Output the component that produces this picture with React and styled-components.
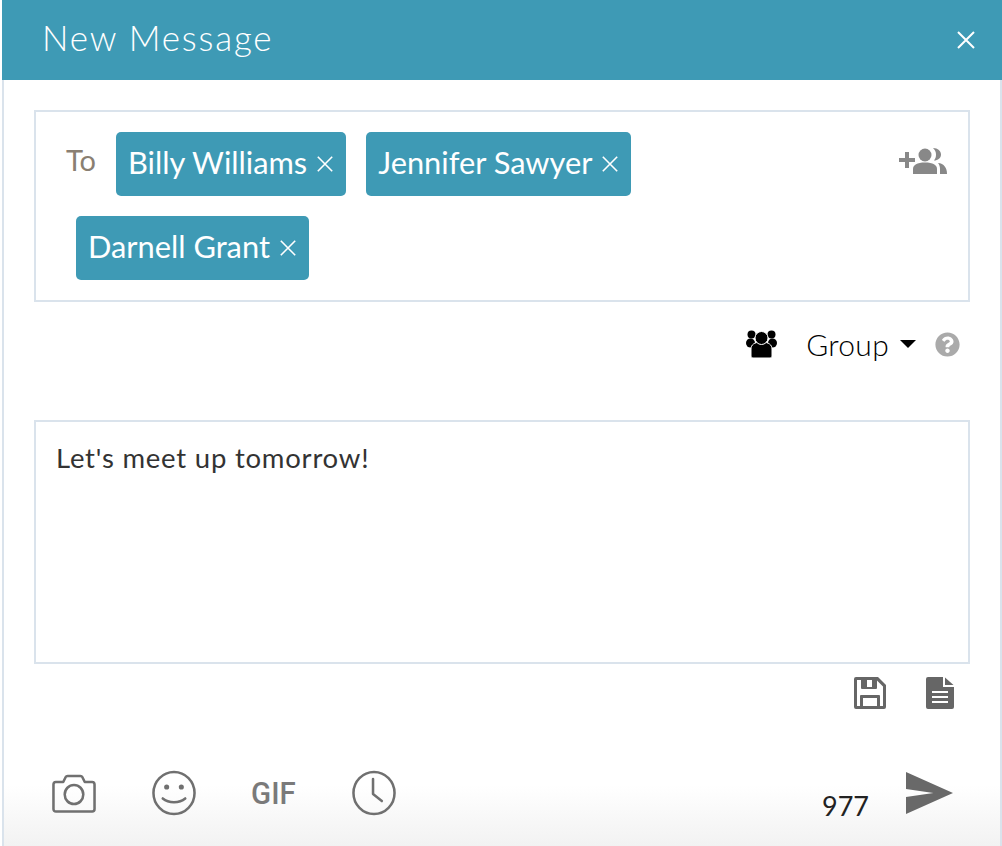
import React from 'react';
import styled, { createGlobalStyle } from 'styled-components';
import { FaQuestionCircle } from 'react-icons/fa';

const GlobalStyle = createGlobalStyle`
    html, body {
        margin: 0;
        padding: 0;
        background: #fff;
    }
    body {
        font-family: "Lato", "Open Sans", sans-serif;
        overflow: hidden;
    }
`

const Panel = styled.div`
    box-sizing: border-box;
    width: 1002px;
    height: 846px;
    padding-left: 2px;
    display: flex;
    flex-direction: column;
`

const Header = styled.header`
    box-sizing: border-box;
    height: 80px;
    flex: none;
    background: #3e9ab5;
    color: #fff;
    display: flex;
    align-items: center;
    justify-content: space-between;
    padding: 0 26px 0 40px;
`

const Title = styled.h1`
    margin: 0 0 6px;
    font-size: 35px;
    font-weight: 300;
    letter-spacing: 1.8px;
`

const Body = styled.main`
    box-sizing: border-box;
    flex: 1;
    display: flex;
    flex-direction: column;
    padding: 30px 30px 0 30px;
    border-left: 2px solid #dae3ec;
    border-right: 2px solid #dae3ec;
    background: linear-gradient(#fff 0, #fff 705px, #f2f2f2 766px);
`

const ToBox = styled.section`
    box-sizing: border-box;
    height: 192px;
    border: 2px solid #dae3ec;
    padding: 20px 21px 0 40px;
    display: flex;
    justify-content: space-between;
    align-items: flex-start;
`

const Chips = styled.div`
    display: flex;
    flex-wrap: wrap;
    gap: 20px;
    width: 600px;
`

const ToLabel = styled.span`
    margin-left: -10px;
    width: 30px;
    height: 56px;
    font-size: 29px;
    line-height: 56px;
    font-weight: 400;
    color: #8a7f72;
`

const Chip = styled.span`
    box-sizing: border-box;
    height: 64px;
    padding: 0 12px 0 12px;
    background: #3e9ab5;
    color: #fff;
    border-radius: 5px;
    display: inline-flex;
    align-items: center;
    gap: 9px;
    font-size: 30.8px;
    font-weight: 400;
`

const ChipName = styled.span`
    margin-top: -3px;
`

const AddGroup = styled.svg`
    width: 48px;
    height: 26px;
    flex: none;
    margin-top: 16px;
    fill: #888;
`

const GroupRow = styled.div`
    height: 84px;
    flex: none;
    display: flex;
    align-items: center;
    justify-content: flex-end;
    padding: 0 10px 0 0;
    margin-bottom: 34px;
`

const GroupIcon = styled.svg`
    width: 31px;
    height: 28px;
    margin-right: 29px;
    fill: #000;
    stroke: #fff;
    stroke-width: 1;
`

const GroupLabel = styled.span`
    font-size: 30px;
    font-weight: 300;
    letter-spacing: 0.3px;
    color: #000;
    margin-right: 11px;
`

const Caret = styled.span`
    width: 0;
    height: 0;
    border-left: 8px solid transparent;
    border-right: 8px solid transparent;
    border-top: 8px solid #000;
    margin-right: 19px;
`

const HelpIcon = styled(FaQuestionCircle)`
    font-size: 25px;
    color: #aaa;
`

const MessageBox = styled.div`
    box-sizing: border-box;
    height: 244px;
    flex: none;
    border: 2px solid #dae3ec;
    padding: 19px 20px;
    font-size: 27.5px;
    font-weight: 400;
    letter-spacing: 0.78px;
    color: #333;
`

const DraftRow = styled.div`
    display: flex;
    justify-content: flex-end;
    align-items: center;
    gap: 40px;
    height: 32px;
    margin-top: 13px;
    padding-right: 16px;
`

const Toolbar = styled.footer`
    display: flex;
    align-items: center;
    justify-content: space-between;
    margin-top: 61px;
    height: 46px;
    padding: 0 17px 0 18px;
`

const ToolGroup = styled.div`
    display: flex;
    align-items: center;
    gap: 56px;
`

const Icon = styled.svg`
    width: 44px;
    height: 46px;
    fill: none;
    stroke: #707070;
    stroke-width: 2.6;
    stroke-linecap: round;
    stroke-linejoin: round;
    display: block;
`

const Gif = styled.span`
    display: block;
    width: 44px;
    text-align: center;
    font-family: "Roboto", sans-serif;
    font-size: 31px;
    font-weight: 500;
    color: #7a7a7a;
    transform: translateX(-2px) scaleX(0.95);
`

const SendGroup = styled.div`
    display: flex;
    align-items: center;
    gap: 37px;
`

const Count = styled.span`
    font-size: 27px;
    font-weight: 400;
    color: #222;
    margin-top: 24px;
`

const SendIcon = styled.svg`
    width: 47px;
    height: 42px;
    fill: #696969;
`

function Close({ size, width }) {
    return (
        <svg width={size} height={size} viewBox="0 0 20 20" fill="none" stroke="#fff" strokeWidth={width}>
            <path d="M2 2 L18 18 M18 2 L2 18" />
        </svg>
    )
}

function App() {
    const chips = ['Billy Williams', 'Jennifer Sawyer', 'Darnell Grant'];
    return (
        <Panel>
            <GlobalStyle />
            <Header>
                <Title>New Message</Title>
                <Close size={20} width={2} />
            </Header>
            <Body>
                <ToBox>
                    <Chips>
                        <ToLabel>To</ToLabel>
                        {chips.map(name => (
                            <Chip key={name}><ChipName>{name}</ChipName><Close size={18} width={1.8} /></Chip>
                        ))}
                    </Chips>
                    <AddGroup viewBox="0 0 48 26">
                        <path d="M0 10h6V4h4v6h6v4h-6v6H6v-6H0z" />
                        <circle cx="26" cy="7" r="6.500" />
                        <path d="M14 26v-5c0-4 4-6.500 12-6.500s12 2.500 12 6.500v5z" />
                        <path d="M34 0c5 0 8 3 8 6.500s-3 6-7 6c1.500-2 2-3.500 2-6s-1-4.500-3-6.500z" />
                        <path d="M39 15c6 .5 9 5 9 11h-7v-5c0-2.500-.6-4.500-2-6z" />
                    </AddGroup>
                </ToBox>
                <GroupRow>
                    <GroupIcon viewBox="0 0 31 28">
                        <circle cx="5.500" cy="4.500" r="4" stroke="none" />
                        <circle cx="25.500" cy="4.500" r="4" stroke="none" />
                        <ellipse cx="4.500" cy="13" rx="4.500" ry="4.500" stroke="none" />
                        <ellipse cx="26.500" cy="13" rx="4.500" ry="4.500" stroke="none" />
                        <path d="M5 26V19c0-4 3-7 10.500-7s10.500 3 10.500 7v7c0 1-1 2-2 2H7c-1 0-2-1-2-2z" />
                        <circle cx="15.500" cy="8" r="6.500" />
                    </GroupIcon>
                    <GroupLabel>Group</GroupLabel>
                    <Caret />
                    <HelpIcon />
                </GroupRow>
                <MessageBox>Let's meet up tomorrow!</MessageBox>
                <DraftRow>
                    <svg width="32" height="32" viewBox="0 0 32 32">
                        <path fill="#666" fillRule="evenodd" d="M2 0H24L32 8V30a2 2 0 0 1-2 2H2a2 2 0 0 1-2-2V2a2 2 0 0 1 2-2zM3 3V29H6V19a1 1 0 0 1 1-1H25a1 1 0 0 1 1 1V29H29V9.500L23 3.500V11a1 1 0 0 1-1 1H8a1 1 0 0 1-1-1V3z" />
                        <path fill="#fff" d="M13 3h5v7h-5z" />
                        <path fill="#fff" d="M9 21h14v8H9z" />
                    </svg>
                    <svg width="28" height="32" viewBox="0 0 28 32">
                        <path fill="#666" d="M2 0H17V10H28V30a2 2 0 0 1-2 2H2a2 2 0 0 1-2-2V2a2 2 0 0 1 2-2z" />
                        <path fill="#666" d="M19 0.500L27.500 8H19z" />
                        <path fill="#fff" d="M6 14h16v2H6zM6 19h16v2H6zM6 24h16v2H6z" />
                    </svg>
                </DraftRow>
                <Toolbar>
                    <ToolGroup>
                        <Icon viewBox="0 0 45 46" preserveAspectRatio="none">
                            <path d="M1.500 14.500c0-1.500 1-2.500 2.500-2.500H11.500l2.500-5c.4-.8 1-1 2-1h13c1 0 1.600.2 2 1l2.500 5H41c1.500 0 2.500 1 2.500 2.500V39c0 1.500-1 2.500-2.500 2.500H4c-1.500 0-2.500-1-2.500-2.500z" />
                            <circle cx="22.500" cy="24.500" r="9.500" />
                        </Icon>
                        <Icon viewBox="0 0 45 46" preserveAspectRatio="none">
                            <circle cx="22.500" cy="23" r="21" />
                            <circle cx="15" cy="17" r="2.600" fill="#707070" stroke="none" />
                            <circle cx="30" cy="17" r="2.600" fill="#707070" stroke="none" />
                            <path d="M11 28.500c6 5 17 5 23 0" />
                        </Icon>
                        <Gif>GIF</Gif>
                        <Icon viewBox="0 0 45 46" preserveAspectRatio="none">
                            <circle cx="22.500" cy="23" r="21" />
                            <path d="M21.500 9v15l9 7" />
                        </Icon>
                    </ToolGroup>
                    <SendGroup>
                        <Count>977</Count>
                        <SendIcon viewBox="0 0 48 42" preserveAspectRatio="none">
                            <path d="M0 0L48 21L0 42V25L28 21L0 17z" />
                        </SendIcon>
                    </SendGroup>
                </Toolbar>
            </Body>
        </Panel>
    )
}

export default App;
